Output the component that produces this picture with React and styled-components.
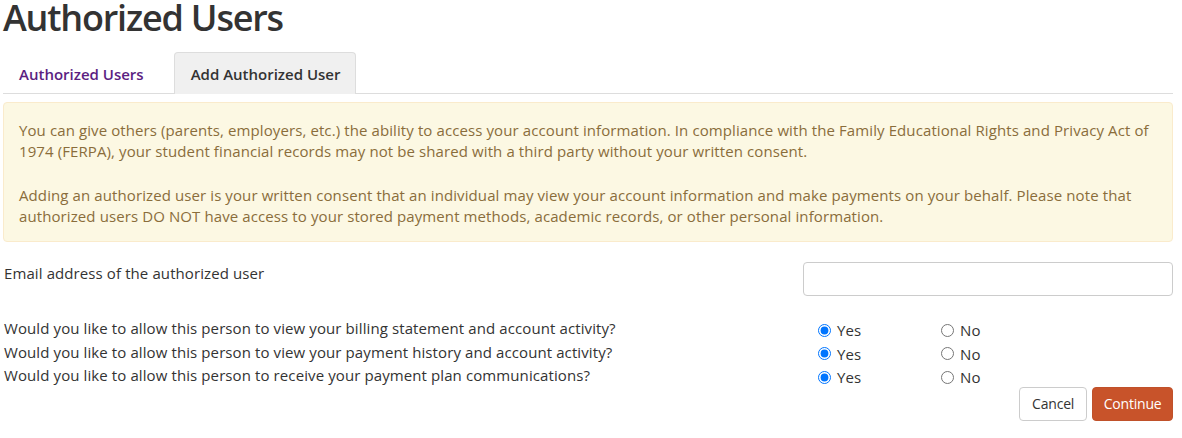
import React from "react";
import styled, { createGlobalStyle } from "styled-components";

const Global = createGlobalStyle`
  html, body { margin: 0; padding: 0; background: #fff; }
  body {
    font-family: "Open Sans", "Noto Sans", sans-serif;
    color: #333;
    font-size: 15px;
    letter-spacing: 0.1px;
  }
  * { box-sizing: border-box; }
`;

const Page = styled.div`
  width: 1170px;
  margin-left: 3px;
`;

const Title = styled.h1`
  margin: 0;
  font-size: 36px;
  line-height: 36px;
  font-weight: 600;
  color: #333;
  letter-spacing: -1.2px;
`;

const Tabs = styled.div`
  display: flex;
  margin-top: 16px;
  border-bottom: 1px solid #ddd;
  height: 42px;
`;

const Tab = styled.div`
  padding: 1px 15px 0 ${p => (p.$active ? "16px" : "15px")};
  height: 42px;
  display: flex;
  align-items: center;
  font-size: 15px;
  font-weight: 600;
  letter-spacing: 0;
  border: 1px solid ${p => (p.$active ? "#ddd" : "transparent")};
  border-bottom: none;
  border-radius: 4px 4px 0 0;
  background: ${p => (p.$active ? "#f0f0f0" : "transparent")};
  color: ${p => (p.$active ? "#333" : "#5b1e82")};
  margin-right: ${p => (p.$first ? "14px" : "0")};
`;

const Alert = styled.div`
  margin-top: 8px;
  background: #fcf8e3;
  border: 1px solid #faebcc;
  border-radius: 4px;
  color: #8a6d3b;
  padding: 17px 15px 14px 15px;
  line-height: 21px;
`;

const Para = styled.p`
  margin: 0 0 ${p => (p.$last ? "0" : "23px")};
`;

const Form = styled.div`
  display: grid;
  grid-template-columns: 1fr 370px;
  margin-top: 20px;
`;

const Label = styled.div`
  padding-left: 1px;
  padding-top: 1px;
  line-height: 20px;
`;

const Input = styled.input`
  width: 370px;
  height: 34px;
  border: 1px solid #ccc;
  border-radius: 4px;
  background: #fff;
  font: inherit;
`;

const Questions = styled.div`
  margin-top: 22px;
  display: grid;
  grid-template-columns: 1fr 370px;
  grid-auto-rows: 23.5px;
`;

const Question = styled.div`
  padding-left: 1px;
  line-height: 20px;
`;

const Options = styled.div`
  display: grid;
  grid-template-columns: 123px 123px 1fr;
  padding-left: 15px;
  padding-top: 2px;
`;

const Option = styled.label`
  display: flex;
  align-items: center;
  gap: 6px;
  height: 20px;
  input {
    margin: 0;
    width: 13px;
    height: 13px;
    accent-color: #0075ff;
  }
`;

const Actions = styled.div`
  display: flex;
  justify-content: flex-end;
  gap: 5px;
  margin-top: -2px;
`;

const Button = styled.button`
  height: 34px;
  padding: 0 ${p => (p.$primary ? "10.5px" : "12px")};
  font: inherit;
  font-size: 14px;
  letter-spacing: -0.2px;
  border-radius: 4px;
  border: 1px solid ${p => (p.$primary ? "#c0512a" : "#ccc")};
  background: ${p => (p.$primary ? "#c8532a" : "#fff")};
  color: ${p => (p.$primary ? "#fff" : "#333")};
`;

const questions = [
  "Would you like to allow this person to view your billing statement and account activity?",
  "Would you like to allow this person to view your payment history and account activity?",
  "Would you like to allow this person to receive your payment plan communications?",
];

export default function App() {
  return (
    <Page>
      <Global />
      <Title>Authorized Users</Title>
      <Tabs>
        <Tab $first>Authorized Users</Tab>
        <Tab $active>Add Authorized User</Tab>
      </Tabs>
      <Alert>
        <Para>
          You can give others (parents, employers, etc.) the ability to access your account information. In compliance with the Family Educational Rights and Privacy Act of
          <br />
          1974 (FERPA), your student financial records may not be shared with a third party without your written consent.
        </Para>
        <Para $last>
          Adding an authorized user is your written consent that an individual may view your account information and make payments on your behalf. Please note that
          <br />
          authorized users DO NOT have access to your stored payment methods, academic records, or other personal information.
        </Para>
      </Alert>
      <Form>
        <Label>Email address of the authorized user</Label>
        <Input type="text" />
      </Form>
      <Questions>
        {questions.map((q, i) => (
          <React.Fragment key={i}>
            <Question>{q}</Question>
            <Options>
              <Option>
                <input type="radio" name={"q" + i} defaultChecked />
                Yes
              </Option>
              <Option>
                <input type="radio" name={"q" + i} />
                No
              </Option>
            </Options>
          </React.Fragment>
        ))}
      </Questions>
      <Actions>
        <Button>Cancel</Button>
        <Button $primary>Continue</Button>
      </Actions>
    </Page>
  );
}
